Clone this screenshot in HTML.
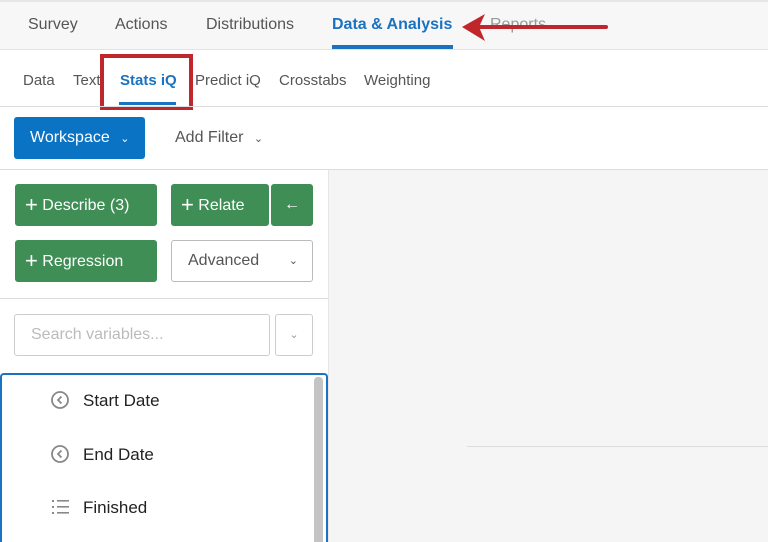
<!DOCTYPE html>
<html style="overflow:hidden"><head><style>
*{margin:0;padding:0;box-sizing:border-box}
html,body{width:768px;height:542px;overflow:hidden}
body{background:#fff;font-family:"Liberation Sans",sans-serif}
#w{position:relative;width:768px;height:542px;overflow:hidden}
.a{position:absolute;white-space:nowrap}
.top{left:0;top:0;width:768px;height:50px;background:#f7f7f7;border-top:2px solid #e6e6e6;border-bottom:1px solid #e3e3e3}
.nav{font-size:16px;color:#555;top:16px}
.sub{font-size:15px;color:#555;top:72px}
.btn{background:#3e8e55;color:#fff;border-radius:3px;font-size:16px;height:42px;line-height:42px}
</style></head><body><div id="w">
<div class="a top"></div>
<div class="a nav" style="left:28px">Survey</div>
<div class="a nav" style="left:115px">Actions</div>
<div class="a nav" style="left:206px">Distributions</div>
<div class="a nav" style="left:332px;color:#1a73c0;font-weight:bold">Data &amp; Analysis</div>
<div class="a" style="left:332px;top:45px;width:121px;height:4px;background:#1a73c0"></div>
<div class="a nav" style="left:490px;color:#999">Reports</div>
<svg class="a" style="left:458px;top:12px" width="152" height="32"><line x1="18" y1="15" x2="148" y2="15" stroke="#c0272d" stroke-width="4" stroke-linecap="round"/><polygon points="4,15 27,2 21,15 27,29" fill="#c0272d"/></svg>

<div class="a sub" style="left:23px">Data</div>
<div class="a sub" style="left:73px">Text</div>
<div class="a sub" style="left:120px;color:#1a73c0;font-weight:bold">Stats iQ</div>
<div class="a" style="left:119px;top:102px;width:57px;height:3px;background:#1a73c0"></div>
<div class="a sub" style="left:195px">Predict iQ</div>
<div class="a sub" style="left:279px">Crosstabs</div>
<div class="a sub" style="left:364px">Weighting</div>
<div class="a" style="left:100px;top:54px;width:93px;height:56px;border:4px solid #c0272d"></div>
<div class="a" style="left:0;top:106px;width:768px;height:1px;background:#ddd"></div>

<div class="a" style="left:14px;top:117px;width:131px;height:42px;background:#0b73c4;border-radius:3px;color:#fff;font-size:16px;line-height:42px;padding-left:16px">Workspace <span style="font-size:11px;margin-left:6px">&#8964;</span></div>
<div class="a" style="left:175px;top:129px;font-size:16px;color:#555">Add Filter <span style="font-size:11px;margin-left:6px">&#8964;</span></div>
<div class="a" style="left:0;top:169px;width:768px;height:1px;background:#ddd"></div>

<div class="a" style="left:328px;top:170px;width:440px;height:372px;background:#f5f5f5;border-left:1px solid #e6e6e6"></div>
<div class="a" style="left:467px;top:446px;width:301px;height:1px;background:#ddd"></div>

<div class="a btn" style="left:15px;top:184px;width:142px;padding-left:10px"><b style="font-size:22px;font-weight:normal;vertical-align:-2px">+</b> Describe (3)</div>
<div class="a btn" style="left:171px;top:184px;width:98px;padding-left:10px"><b style="font-size:22px;font-weight:normal;vertical-align:-2px">+</b> Relate</div>
<div class="a btn" style="left:271px;top:184px;width:42px;text-align:center">&#8592;</div>
<div class="a btn" style="left:15px;top:240px;width:142px;padding-left:10px"><b style="font-size:22px;font-weight:normal;vertical-align:-2px">+</b> Regression</div>
<div class="a" style="left:171px;top:240px;width:142px;height:42px;border:1px solid #bbb;border-radius:3px;font-size:16px;color:#555;line-height:40px;padding-left:16px">Advanced<span style="position:absolute;right:14px;font-size:11px">&#8964;</span></div>
<div class="a" style="left:0;top:298px;width:328px;height:1px;background:#ddd"></div>
<div class="a" style="left:14px;top:314px;width:256px;height:42px;border:1px solid #ccc;border-radius:3px;font-size:16px;color:#bbb;line-height:40px;padding-left:16px">Search variables...</div>
<div class="a" style="left:275px;top:314px;width:38px;height:42px;border:1px solid #ccc;border-radius:3px;font-size:11px;color:#999;line-height:40px;text-align:center">&#8964;</div>

<div class="a" style="left:0;top:373px;width:328px;height:169px;border:2px solid #1a73c0;border-bottom:none;border-radius:4px 4px 0 0"></div>
<div class="a" style="left:314px;top:377px;width:9px;height:165px;background:#c4c4c4;border-radius:4px 4px 0 0"></div>
<svg class="a" style="left:50px;top:390px" width="20" height="20"><circle cx="10" cy="10" r="8" fill="none" stroke="#888" stroke-width="1.8"/><path d="M11.5 6.5 L8 10 L11.5 13.5" fill="none" stroke="#888" stroke-width="1.8"/></svg>
<div class="a" style="left:83px;top:391px;font-size:17px;color:#222">Start Date</div>
<svg class="a" style="left:50px;top:444px" width="20" height="20"><circle cx="10" cy="10" r="8" fill="none" stroke="#888" stroke-width="1.8"/><path d="M11.5 6.5 L8 10 L11.5 13.5" fill="none" stroke="#888" stroke-width="1.8"/></svg>
<div class="a" style="left:83px;top:445px;font-size:17px;color:#222">End Date</div>
<svg class="a" style="left:52px;top:499px" width="18" height="16"><g fill="#888"><rect x="0" y="1" width="2" height="2"/><rect x="0" y="7" width="2" height="2"/><rect x="0" y="13" width="2" height="2"/><rect x="5" y="1" width="12" height="1.6"/><rect x="5" y="7" width="12" height="1.6"/><rect x="5" y="13" width="12" height="1.6"/></g></svg>
<div class="a" style="left:83px;top:498px;font-size:17px;color:#222">Finished</div>
</div></body></html>
